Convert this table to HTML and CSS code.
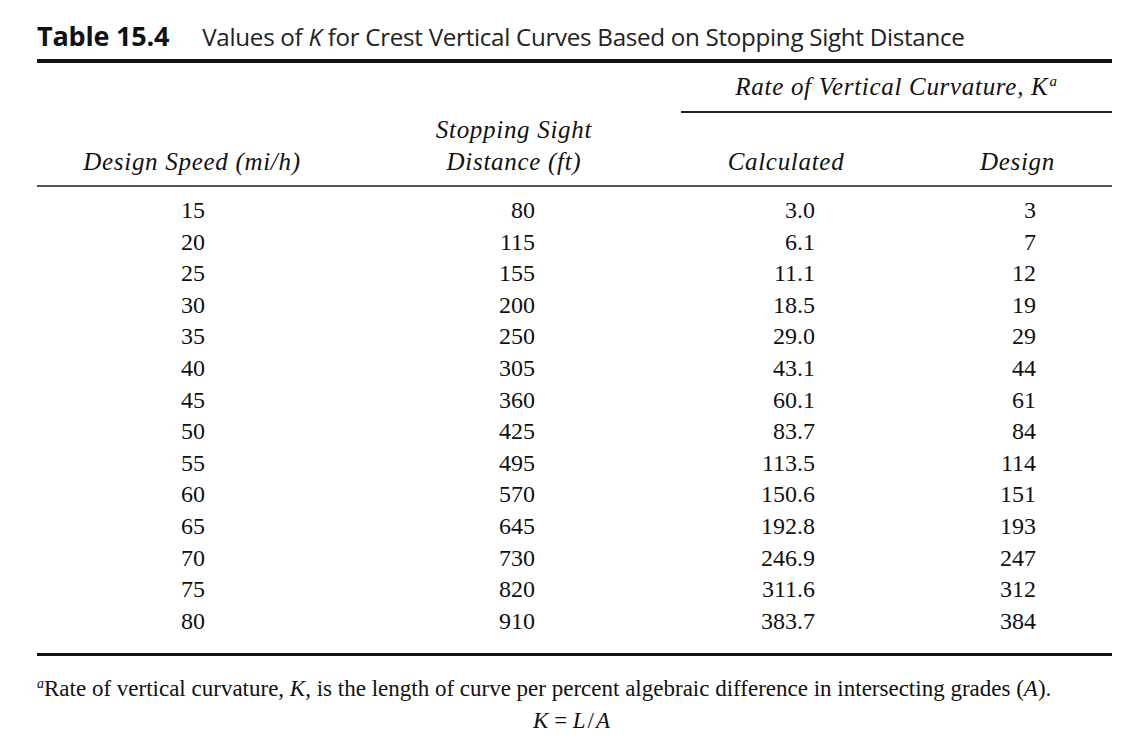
FILE: index.html
```html
<!DOCTYPE html>
<html>
<head>
<meta charset="utf-8">
<link rel="stylesheet" href="styles.css">
</head>
<body>
<div class="page">
  <h1 class="title"><span class="tnum">Table 15.4</span><span class="ttext">Values of <i>K</i> for Crest Vertical Curves Based on Stopping Sight Distance</span></h1>
  <div class="rule-top"></div>
  <div class="head">
    <div class="h-speed">Design Speed (mi/h)</div>
    <div class="h-ssd">Stopping Sight<br>Distance (ft)</div>
    <div class="h-rate">Rate of Vertical Curvature, K<sup>a</sup></div>
    <div class="h-calc">Calculated</div>
    <div class="h-design">Design</div>
  </div>
  <div class="body">
    <div class="row"><span class="c1">15</span><span class="c2">80</span><span class="c3">3.0</span><span class="c4">3</span></div>
    <div class="row"><span class="c1">20</span><span class="c2">115</span><span class="c3">6.1</span><span class="c4">7</span></div>
    <div class="row"><span class="c1">25</span><span class="c2">155</span><span class="c3">11.1</span><span class="c4">12</span></div>
    <div class="row"><span class="c1">30</span><span class="c2">200</span><span class="c3">18.5</span><span class="c4">19</span></div>
    <div class="row"><span class="c1">35</span><span class="c2">250</span><span class="c3">29.0</span><span class="c4">29</span></div>
    <div class="row"><span class="c1">40</span><span class="c2">305</span><span class="c3">43.1</span><span class="c4">44</span></div>
    <div class="row"><span class="c1">45</span><span class="c2">360</span><span class="c3">60.1</span><span class="c4">61</span></div>
    <div class="row"><span class="c1">50</span><span class="c2">425</span><span class="c3">83.7</span><span class="c4">84</span></div>
    <div class="row"><span class="c1">55</span><span class="c2">495</span><span class="c3">113.5</span><span class="c4">114</span></div>
    <div class="row"><span class="c1">60</span><span class="c2">570</span><span class="c3">150.6</span><span class="c4">151</span></div>
    <div class="row"><span class="c1">65</span><span class="c2">645</span><span class="c3">192.8</span><span class="c4">193</span></div>
    <div class="row"><span class="c1">70</span><span class="c2">730</span><span class="c3">246.9</span><span class="c4">247</span></div>
    <div class="row"><span class="c1">75</span><span class="c2">820</span><span class="c3">311.6</span><span class="c4">312</span></div>
    <div class="row"><span class="c1">80</span><span class="c2">910</span><span class="c3">383.7</span><span class="c4">384</span></div>
  </div>
  <div class="rule-bottom"></div>
  <p class="note"><sup class="fa">a</sup>Rate of vertical curvature, <i>K</i>, is the length of curve per percent algebraic difference in intersecting grades (<i>A</i>).</p>
  <p class="formula"><i>K</i> = <i>L</i>&#8202;/&#8202;<i>A</i></p>
</div>
</body>
</html>
```
FILE: styles.css
```css
html, body {
  margin: 0;
  padding: 0;
  background: #fff;
}
.page {
  width: 1075px;
  margin-left: 37px;
  padding-top: 13px;
  font-family: "Liberation Serif", "Times New Roman", serif;
  color: #111;
}
.title {
  margin: 0;
  height: 42px;
  line-height: 42px;
  font-weight: normal;
  font-family: "Open Sans", "Liberation Sans", sans-serif;
  white-space: nowrap;
}
.tnum {
  font-size: 27px;
  font-weight: 700;
  color: #111;
  letter-spacing: -0.2px;
  margin-right: 33px;
}
.ttext {
  font-size: 24.2px;
  color: #222;
  letter-spacing: -0.3px;
}
.ttext i { font-style: italic; }
.rule-top {
  height: 4px;
  background: #111;
  margin-top: 4px;
}
.head {
  display: grid;
  grid-template-columns: 310px 334px 210px 221px;
  grid-template-rows: 50px 72px;
  font-style: italic;
  font-size: 25px;
  letter-spacing: 0.7px;
  line-height: 32px;
  border-bottom: 2px solid #555;
}
.h-speed {
  grid-column: 1;
  grid-row: 1 / span 2;
  align-self: end;
  text-align: center;
  padding-bottom: 7px;
}
.h-ssd {
  grid-column: 2;
  grid-row: 1 / span 2;
  align-self: end;
  text-align: center;
  padding-bottom: 7px;
}
.h-rate {
  grid-column: 3 / span 2;
  grid-row: 1;
  text-align: center;
  padding-top: 8px;
  border-bottom: 2px solid #222;
}
.h-rate sup {
  font-size: 15px;
  vertical-align: 9px;
  line-height: 0;
  margin-left: 1px;
}
.h-calc {
  grid-column: 3;
  grid-row: 2;
  align-self: end;
  text-align: center;
  padding-bottom: 7px;
}
.h-design {
  grid-column: 4;
  grid-row: 2;
  align-self: end;
  text-align: center;
  padding-left: 32px;
  padding-bottom: 7px;
}
.body {
  padding-top: 8px;
  padding-bottom: 16px;
}
.row {
  display: grid;
  grid-template-columns: 310px 334px 210px 221px;
  height: 31.6px;
  line-height: 31.6px;
  font-size: 24px;
  text-align: right;
}
.c1 { padding-right: 142px; }
.c2 { padding-right: 146px; }
.c3 { padding-right: 76px; }
.c4 { padding-right: 76px; }
.rule-bottom {
  height: 3px;
  background: #111;
}
.note {
  margin: 17px 0 0 0;
  font-size: 23px;
  line-height: 32px;
  white-space: nowrap;
}
.note .fa {
  font-style: italic;
  font-size: 14px;
  vertical-align: 8px;
  line-height: 0;
}
.formula {
  margin: 0;
  text-align: center;
  font-size: 23px;
  line-height: 32px;
  padding-right: 6px;
}
```
